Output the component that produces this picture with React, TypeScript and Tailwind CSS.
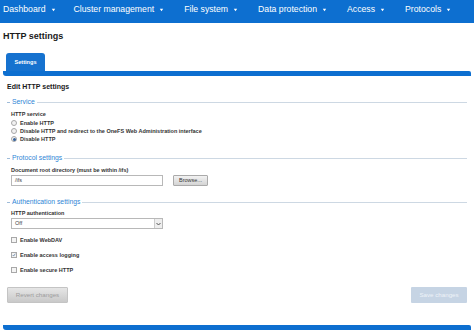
import React from "react";

const navItems = ["Dashboard", "Cluster management", "File system", "Data protection", "Access", "Protocols"];

function Caret() {
	return (
		<svg width="5" height="4" viewBox="0 0 5 4" className="ml-[5px] mt-[1px]">
			<path d="M0.8 0.8 L4.2 0.8 L2.5 3.2 Z" fill="#ffffff" />
		</svg>
	);
}

function Legend({ title }: { title: string }) {
	return (
		<div className="flex items-center h-[10px]">
			<div className="w-[3px] h-px bg-[#9fbcd9]" />
			<span className="pl-[2px] pr-[2px] text-[6.8px] font-normal text-[#2f86d6]">{title}</span>
			<div className="flex-1 h-px bg-[#cdd8e3]" />
		</div>
	);
}

function Radio({ label, checked }: { label: string; checked?: boolean }) {
	return (
		<label className="flex items-center h-[8px] gap-[3px]">
			<span className="w-[6px] h-[6px] rounded-full border border-[#a8a8a8] bg-[#f2f2f2] flex items-center justify-center">
				{checked && <span className="w-[3px] h-[3px] rounded-full bg-[#36639c]" />}
			</span>
			<span>{label}</span>
		</label>
	);
}

function Checkbox({ label, checked }: { label: string; checked?: boolean }) {
	return (
		<label className="flex items-center h-[8px] gap-[3px]">
			<span className="w-[6px] h-[6px] border border-[#a8a8a8] bg-[#f4f4f4] flex items-center justify-center">
				{checked && (
					<svg width="6" height="6" viewBox="0 0 6 6">
						<path d="M1 3 L2.4 4.6 L5 1" stroke="#4a6f9c" strokeWidth="1" fill="none" />
					</svg>
				)}
			</span>
			<span>{label}</span>
		</label>
	);
}

export default function App() {
	return (
		<div
			className="w-[474px] h-[335px] bg-white overflow-hidden text-[#222]"
			style={{ fontFamily: '"Liberation Sans", Arial, sans-serif' }}
		>
			<nav className="h-[23px] bg-[#0d6fd0] flex items-center pl-[3px] pb-[3px]">
				{navItems.map((item, i) => (
					<div
						key={item}
						className={`flex items-center text-white text-[8.7px] ${i === 0 ? "" : i === 1 ? "ml-[18px]" : "ml-[20px]"}`}
					>
						<span>{item}</span>
						<Caret />
					</div>
				))}
			</nav>

			<div className="px-[3px]">
				<h1 className="mt-[7px] text-[9px] font-bold text-[#1a1a1a] leading-[12px]">HTTP settings</h1>

				<div className="mt-[11px] flex">
					<div className="ml-[3px] w-[39px] h-[18px] bg-[#1672cf] rounded-t-[3px] flex items-center justify-center text-white text-[5.6px] font-bold">
						Settings
					</div>
				</div>
				<div className="h-[5px] bg-[#0d6fd0] rounded-bl-[3px] rounded-tr-[2px]" />

				<div className="px-[4px] text-[5.5px] font-bold text-[#333]">
					<h2 className="mt-[6px] text-[7px] font-bold text-[#1a1a1a] leading-[10px]">Edit HTTP settings</h2>

					<div className="mt-[5px]">
						<Legend title="Service" />
					</div>
					<div className="pl-[4px] mt-[3px]">
						<div className="h-[8px] leading-[8px]">HTTP service</div>
						<div className="mt-[1px] flex flex-col">
							<Radio label="Enable HTTP" />
							<Radio label="Disable HTTP and redirect to the OneFS Web Administration interface" />
							<Radio label="Disable HTTP" checked />
						</div>
					</div>

					<div className="mt-[10px]">
						<Legend title="Protocol settings" />
					</div>
					<div className="pl-[4px] mt-[3px]">
						<div className="h-[8px] leading-[8px]">Document root directory (must be within /ifs)</div>
						<div className="mt-[1px] flex items-center gap-[10px]">
							<div className="w-[152px] h-[11px] border border-[#b8b8b8] bg-white flex items-center px-[3px] font-normal text-[5.5px] text-[#444]">
								/ifs
							</div>
							<div className="w-[35px] h-[11px] border border-[#aaa] rounded-[1px] bg-gradient-to-b from-[#f2f2f2] to-[#d4d4d4] flex items-center justify-center text-[5.5px] font-normal text-[#333]">
								Browse...
							</div>
						</div>
					</div>

					<div className="mt-[11px]">
						<Legend title="Authentication settings" />
					</div>
					<div className="pl-[4px] mt-[2px]">
						<div className="h-[8px] leading-[8px]">HTTP authentication</div>
						<div className="mt-[1px] w-[152px] h-[11px] border border-[#b8b8b8] bg-white flex items-center">
							<span className="flex-1 px-[3px] font-normal text-[5.5px] text-[#444]">Off</span>
							<span className="w-[8px] h-full border-l border-[#ccc] bg-[#eee] flex items-center justify-center">
								<svg width="5" height="4" viewBox="0 0 5 4">
									<path d="M0.5 1 L2.5 3 L4.5 1" stroke="#555" strokeWidth="1" fill="none" />
								</svg>
							</span>
						</div>
						<div className="mt-[7px] flex flex-col gap-[7px]">
							<Checkbox label="Enable WebDAV" />
							<Checkbox label="Enable access logging" checked />
							<Checkbox label="Enable secure HTTP" />
						</div>
					</div>

					<div className="mt-[13px] flex justify-between items-center">
						<div className="w-[61px] h-[16px] border border-[#c4c4c4] rounded-[1px] bg-gradient-to-b from-[#e6e6e6] to-[#c9c9c9] flex items-center justify-center text-[6.2px] font-normal text-[#9c9c9c]">
							Revert changes
						</div>
						<div className="w-[56px] h-[16px] bg-[#c6d4e4] rounded-[1px] flex items-center justify-center text-[6.2px] font-normal text-[#eef3f8]">
							Save changes
						</div>
					</div>
				</div>

				<div className="mt-[22px] h-[5px] bg-[#0d6fd0] rounded-bl-[3px] rounded-tr-[2px]" />
			</div>
		</div>
	);
}
